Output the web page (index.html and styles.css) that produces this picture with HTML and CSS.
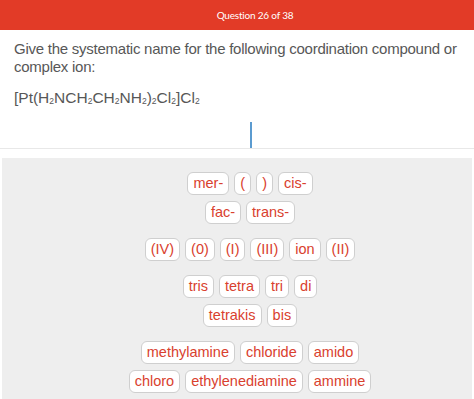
FILE: index.html
```html
<!DOCTYPE html>
<html>
<head>
<meta charset="utf-8">
<link rel="stylesheet" href="styles.css">
</head>
<body>
<div class="header"><span class="header-title">Question 26 of 38</span></div>
<div class="question">
  <p class="prompt">Give the systematic name for the following coordination compound or complex ion:</p>
  <p class="formula">[Pt(H<sub>2</sub>NCH<sub>2</sub>CH<sub>2</sub>NH<sub>2</sub>)<sub>2</sub>Cl<sub>2</sub>]Cl<sub>2</sub></p>
</div>
<div class="answer"><span class="cursor"></span></div>
<div class="bank">
  <div class="group">
    <div class="row"><span class="chip">mer-</span><span class="chip">(</span><span class="chip">)</span><span class="chip">cis-</span></div>
    <div class="row"><span class="chip">fac-</span><span class="chip">trans-</span></div>
  </div>
  <div class="group">
    <div class="row"><span class="chip">(IV)</span><span class="chip">(0)</span><span class="chip">(I)</span><span class="chip">(III)</span><span class="chip">ion</span><span class="chip">(II)</span></div>
  </div>
  <div class="group">
    <div class="row"><span class="chip">tris</span><span class="chip">tetra</span><span class="chip">tri</span><span class="chip">di</span></div>
    <div class="row"><span class="chip">tetrakis</span><span class="chip">bis</span></div>
  </div>
  <div class="group">
    <div class="row"><span class="chip">methylamine</span><span class="chip">chloride</span><span class="chip">amido</span></div>
    <div class="row"><span class="chip">chloro</span><span class="chip">ethylenediamine</span><span class="chip">ammine</span></div>
  </div>
</div>
</body>
</html>
```
FILE: styles.css
```css
html, body {
  margin: 0;
  padding: 0;
  background: #ffffff;
  height: 399px;
  overflow: hidden;
}
body {
  font-family: "Liberation Sans", Arial, sans-serif;
}
.header {
  height: 30px;
  background: #e23b27;
  display: flex;
  align-items: center;
  justify-content: center;
  padding-left: 36px;
}
.header-title {
  font-family: Lato, sans-serif;
  font-size: 10px;
  letter-spacing: -0.2px;
  color: #ffffff;
}
.question {
  padding: 10px 14px 0 14px;
  color: #575757;
}
.prompt {
  margin: 0;
  font-size: 15px;
  letter-spacing: -0.25px;
  line-height: 17.5px;
}
.formula {
  margin: 14px 0 0 0;
  font-size: 15.5px;
  line-height: 18px;
}
.formula sub {
  font-size: 0.55em;
  vertical-align: -0.1em;
}
.answer {
  height: 26px;
  margin-top: 12px;
  border-bottom: 1px solid #e8e8e8;
  display: flex;
  justify-content: center;
  padding-left: 28px;
}
.cursor {
  width: 2px;
  height: 26px;
  background: #5b9bd0;
}
.bank {
  box-sizing: border-box;
  margin: 9px 2px 0 2px;
  background: #eeeeee;
  height: 242px;
  padding: 14px 0 0 26px;
  display: flex;
  flex-direction: column;
  gap: 14px;
}
.group {
  display: flex;
  flex-direction: column;
  gap: 6px;
}
.row {
  display: flex;
  justify-content: center;
  gap: 5px;
}
.chip {
  background: #ffffff;
  border: 1px solid #cfcfcf;
  border-radius: 6px;
  color: #d9412e;
  font-size: 14.5px;
  line-height: 17px;
  padding: 2px 5px;
}
```
